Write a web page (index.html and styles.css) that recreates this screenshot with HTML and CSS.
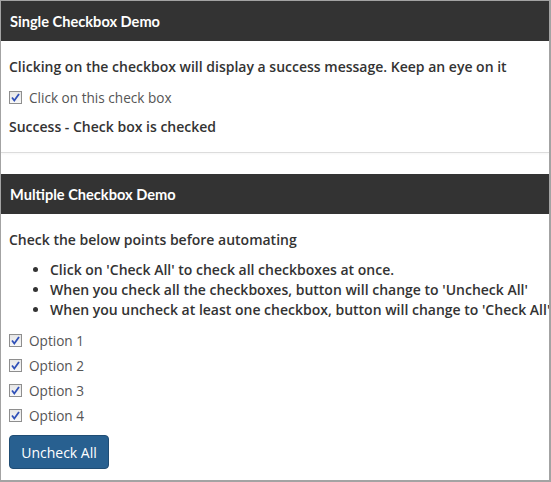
FILE: index.html
```html
<!DOCTYPE html>
<html>
<head>
<meta charset="utf-8">
<link rel="stylesheet" href="styles.css">
</head>
<body>
<div class="frame">
  <section class="panel">
    <div class="panel-heading">Single Checkbox Demo</div>
    <div class="panel-body">
      <p class="lead">Clicking on the checkbox will display a success message. Keep an eye on it</p>
      <label class="check"><span class="box"><svg viewBox="0 0 13 13" width="13" height="13"><path d="M3 6.5 L5.3 9.5 L10 3" fill="none" stroke="#3050b8" stroke-width="1.8"/></svg></span>Click on this check box</label>
      <p class="success">Success - Check box is checked</p>
    </div>
  </section>
  <section class="panel panel-second">
    <div class="panel-heading">Multiple Checkbox Demo</div>
    <div class="panel-body">
      <p class="lead">Check the below points before automating</p>
      <ul class="points">
        <li>Click on 'Check All' to check all checkboxes at once.</li>
        <li>When you check all the checkboxes, button will change to 'Uncheck All'</li>
        <li>When you uncheck at least one checkbox, button will change to 'Check All'</li>
      </ul>
      <div class="options">
        <label class="check opt"><span class="box"><svg viewBox="0 0 13 13" width="13" height="13"><path d="M3 6.5 L5.3 9.5 L10 3" fill="none" stroke="#3050b8" stroke-width="1.8"/></svg></span>Option 1</label>
        <label class="check opt"><span class="box"><svg viewBox="0 0 13 13" width="13" height="13"><path d="M3 6.5 L5.3 9.5 L10 3" fill="none" stroke="#3050b8" stroke-width="1.8"/></svg></span>Option 2</label>
        <label class="check opt"><span class="box"><svg viewBox="0 0 13 13" width="13" height="13"><path d="M3 6.5 L5.3 9.5 L10 3" fill="none" stroke="#3050b8" stroke-width="1.8"/></svg></span>Option 3</label>
        <label class="check opt"><span class="box"><svg viewBox="0 0 13 13" width="13" height="13"><path d="M3 6.5 L5.3 9.5 L10 3" fill="none" stroke="#3050b8" stroke-width="1.8"/></svg></span>Option 4</label>
      </div>
      <button class="btn">Uncheck All</button>
    </div>
  </section>
</div>
</body>
</html>
```

FILE: styles.css
```css
html, body {
  margin: 0;
  padding: 0;
  background: #fff;
}
.frame {
  box-sizing: border-box;
  width: 551px;
  height: 482px;
  border-style: solid;
  border-color: #a3a3a3;
  border-width: 1px 2px 2px 1px;
  overflow: hidden;
  font-family: "Open Sans", sans-serif;
  color: #333;
}
.panel {
  border-bottom: 1px solid #dcdcdc;
  box-shadow: 0 1px 2px rgba(0,0,0,0.04);
}
.panel-second {
  margin-top: 21px;
  border-bottom: none;
  box-shadow: none;
}
.panel-heading {
  background: #333;
  color: #fff;
  height: 40px;
  line-height: 41px;
  padding-left: 9px;
  font-family: "Lato", "Open Sans", sans-serif;
  font-size: 14.6px;
  font-weight: 700;
}
.panel-body {
  padding: 15px 8px 0 8px;
}
.lead {
  margin: 0;
  font-size: 14px;
  font-weight: 600;
  line-height: 22px;
  white-space: nowrap;
}
.check {
  display: flex;
  align-items: center;
  gap: 7px;
  font-size: 13.6px;
  color: #555;
  height: 20px;
  margin-top: 9px;
}
.box {
  box-sizing: border-box;
  width: 13px;
  height: 13px;
  border: 1px solid #8e8e8e;
  background: linear-gradient(#e6e6e6, #f8f8f8);
  display: inline-flex;
}
.box svg { display: block; margin: -1px; }
.success {
  margin: 9px 0 0 0;
  font-size: 14px;
  font-weight: 600;
  line-height: 22px;
  padding-bottom: 14px;
}
.points {
  margin: 9px 0 0 0;
  padding-left: 41px;
  font-size: 14px;
  font-weight: 600;
  line-height: 20px;
  white-space: nowrap;
}
.options {
  margin-top: 10px;
  display: flex;
  flex-direction: column;
  gap: 5px;
}
.opt {
  margin-top: 0;
}
.btn {
  display: block;
  margin-top: 10px;
  width: 100px;
  height: 34px;
  padding: 0;
  background: #286090;
  border: 1px solid #204d74;
  border-radius: 4px;
  color: #fff;
  font-family: "Open Sans", sans-serif;
  font-size: 14px;
  font-weight: 400;
  cursor: pointer;
}
```
